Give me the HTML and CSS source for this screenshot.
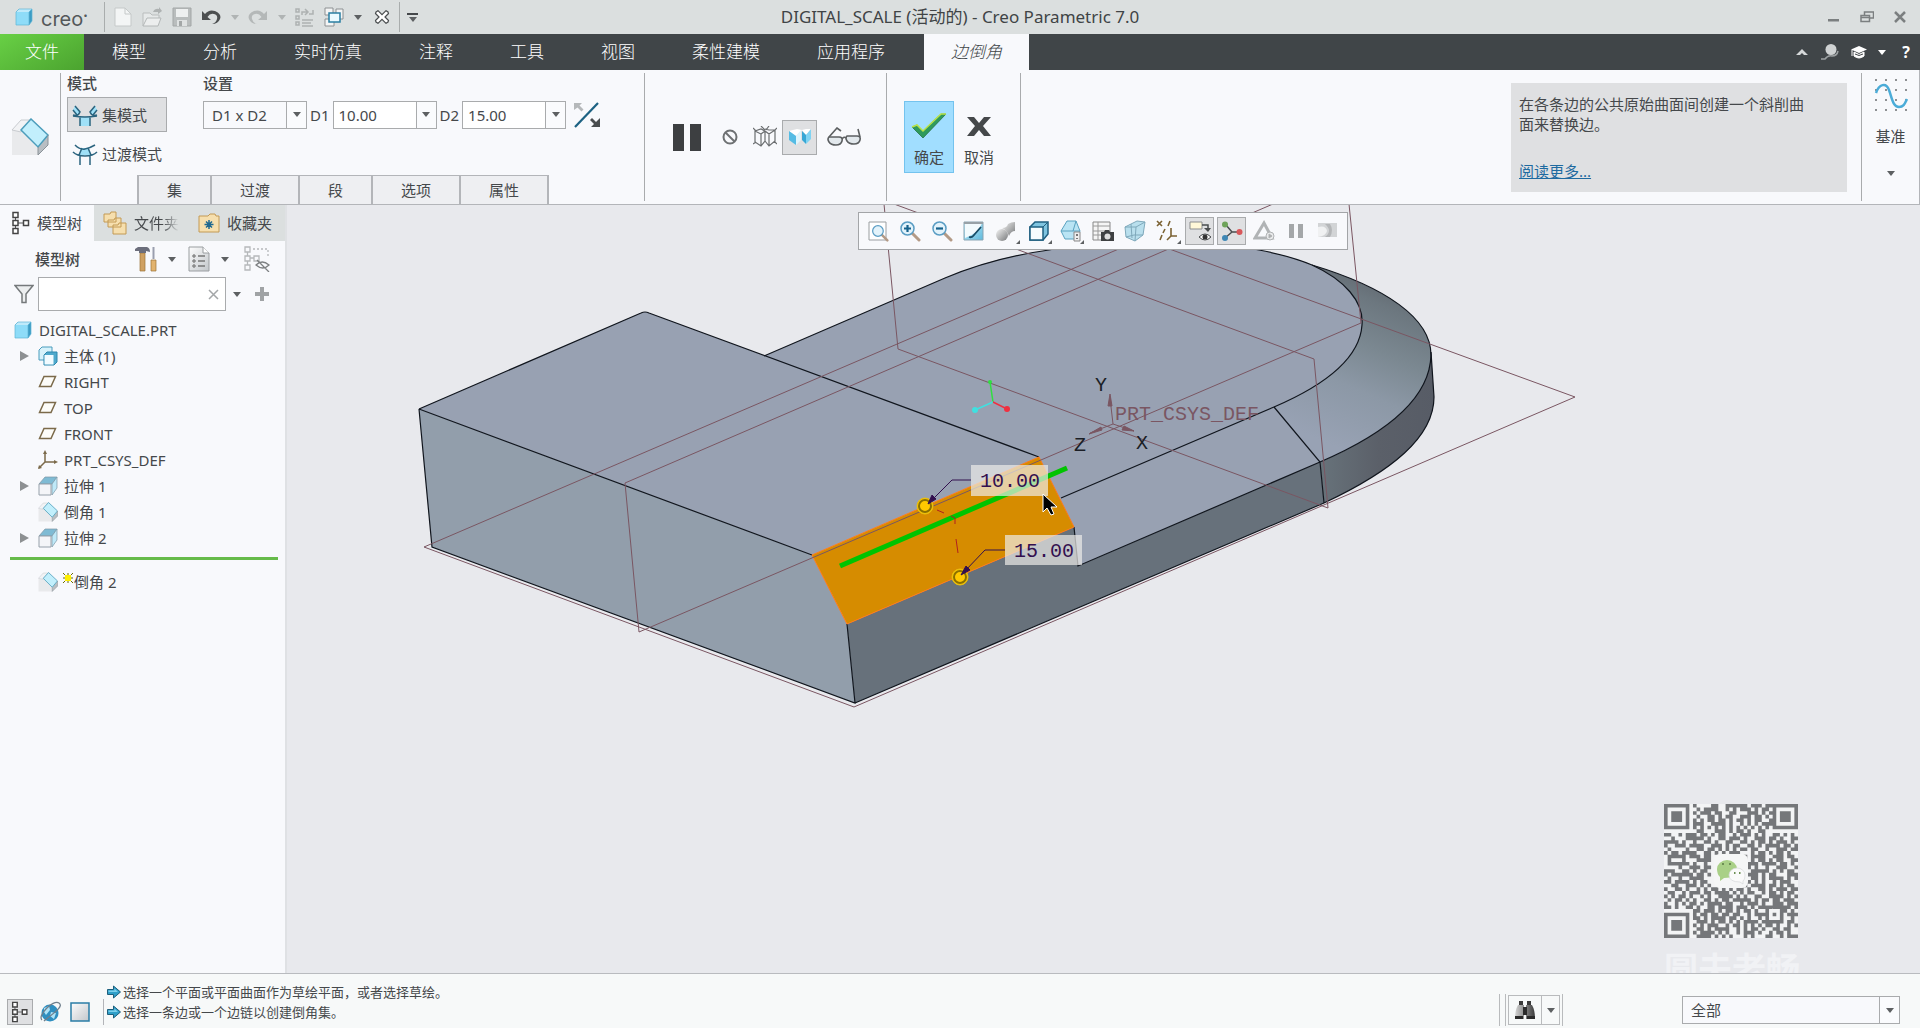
FILE: index.html
```html
<!DOCTYPE html>
<html lang="zh-CN">
<head>
    <meta charset="UTF-8">
    <meta name="viewport" content="width=device-width, initial-scale=1.0">
    <title>DIGITAL_SCALE (活动的) - Creo Parametric 7.0</title>
    <link rel="stylesheet" href="styles.css">
    <script src="qr.js" defer></script>
</head>
<body>

    <!-- 共用图标 -->
    <svg class="defs" width="0" height="0" aria-hidden="true">
        <defs>
            <linearGradient id="gBlue" x1="0" y1="0" x2="1" y2="1">
                <stop offset="0" stop-color="#c9f0fd"/><stop offset="1" stop-color="#5fb9dc"/>
            </linearGradient>
            <linearGradient id="gGray" x1="0" y1="0" x2="1" y2="1">
                <stop offset="0" stop-color="#fdfdfd"/><stop offset="1" stop-color="#c3c7cb"/>
            </linearGradient>
            <linearGradient id="gSteel" x1="0" y1="0" x2="1" y2="0">
                <stop offset="0" stop-color="#d4d4d4"/><stop offset="1" stop-color="#3c3c3c"/>
            </linearGradient>
            <linearGradient id="gBall" x1="0" y1="0" x2="1" y2="1">
                <stop offset="0" stop-color="#f4f4f4"/><stop offset="1" stop-color="#77797b"/>
            </linearGradient>
            <symbol id="cube" viewBox="0 0 20 20">
                <path d="M2 5 5 2h13v12l-3 4H2z" fill="#3c9cc4"/>
                <path d="M2 5 5 2h13l-3 3z" fill="#bfeafa"/>
                <path d="M2 5h13v13H2z" fill="#8edcf8"/>
                <path d="M2 5 5 2h13v12l-3 4H2zM15 5l3-3M15 5v13" fill="none" stroke="#5fb4d6" stroke-width=".7"/>
            </symbol>
            <symbol id="tree" viewBox="0 0 18 24">
                <path d="M3.500 7v3.500M3.500 14v3.500M6 12h5" stroke="#555" fill="none"/>
                <path d="M1 1.500h5v5H1zM1 9.500h5v5H1zM1 17.500h5v5H1zM11.500 9.500h5v5h-5z" fill="#fff" stroke="#444" stroke-width="1.500"/>
            </symbol>
            <symbol id="plane" viewBox="0 0 20 14">
                <path d="M6 1.500h11.500L13 11.500H1.500z" fill="#fdfcf8" stroke="#7b6a4a" stroke-width="1.500"/>
            </symbol>
            <symbol id="extrude" viewBox="0 0 20 20">
                <path d="M1 8 7 1h12l-5 7z" fill="#7fbbd4" stroke="#7c97a5" stroke-width=".7"/>
                <path d="M14 8l5-7v11l-5 7z" fill="#bfe9f8" stroke="#7c97a5" stroke-width=".7"/>
                <path d="M1 8h12v11H1z" fill="#f4f5f8" stroke="#96a0aa"/>
            </symbol>
            <symbol id="chamfer" viewBox="0 0 38 38">
                <path d="M1 12h12l14 19v6H1z" fill="#e9eaec"/>
                <path d="M1 12 10 2h10L10 14z" fill="#f2f3f5" stroke="#c9ccd0"/>
                <path d="M27 29 37 17v10L27 37z" fill="#b9bec3"/>
                <path d="M10 12 20 1l17 16-10 12z" fill="#c2effc" stroke="#4c9dbb" stroke-width="1.500"/>
                <path d="M27 29v8l10-10V17" fill="none" stroke="#8a9298"/>
            </symbol>
            <symbol id="arrow" viewBox="0 0 14 14">
                <path d="M.5 4.500h6v-3.500L13.500 7 6.500 13V9.500h-6z" fill="#2f9fc8" stroke="#1d5f7c"/>
                <path d="M1.500 5.500h6v-2l3.500 3.500h-9.500z" fill="#7cd0ec"/>
            </symbol>
            <symbol id="magnifier" viewBox="0 0 22 22">
                <path d="M13 13l7 7" stroke="#b39a86" stroke-width="3" stroke-linecap="round"/>
                <circle cx="8.500" cy="8.500" r="6.500" fill="#e3f3fb" stroke="#5a9dc4" stroke-width="1.500"/>
            </symbol>
        </defs>
    </svg>

    <!-- 标题栏 -->
    <header class="titlebar">
        <div class="quick">
            <div class="brand">
                <svg width="20" height="20"><use href="#cube"/></svg>
                <span class="brand-name">creo<sup>•</sup></span>
            </div>
            <button class="q" title="新建"><svg width="18" height="20" viewBox="0 0 18 20"><path d="M1 1h10l6 6v12H1z" fill="#f3f5f5" stroke="#c5c9c9"/><path d="M11 1v6h6" fill="none" stroke="#c5c9c9"/></svg></button>
            <button class="q" title="打开"><svg width="22" height="20" viewBox="0 0 22 20"><path d="M2 19V6h7l2 2h7v3" fill="#e6e9e9" stroke="#b9bdbd"/><path d="M2 19 6 11h14l-3 8z" fill="#eceeee" stroke="#b4b8b8"/><path d="M12 5q2-4 6-3v-2l3 4-4 3V5" fill="#aeb2b2"/></svg></button>
            <button class="q" title="保存"><svg width="20" height="20" viewBox="0 0 20 20"><path d="M1 1h18v18H1z" fill="#b9bdbd" stroke="#a3a7a7"/><path d="M4 2h12v8H4z" fill="#eef0f0"/><path d="M5 13h10v6H5z" fill="#dfe2e2"/><path d="M7 14h3v5H7z" fill="#a3a7a7"/></svg></button>
            <button class="q" title="撤消"><svg width="20" height="16" viewBox="0 0 20 16"><path d="M1 2v9h9L6.500 8Q9 4 13 5t3 5-5 5q6 0 8-5T14 2Q8 0 4 5z" fill="#4c4f50"/></svg><i class="caret pale"></i></button>
            <button class="q" title="重做"><svg width="20" height="16" viewBox="0 0 20 16"><path d="M19 2v9h-9L13.500 8Q11 4 7 5t-3 5 5 5q-6 0-8-5T6 2Q12 0 16 5z" fill="#b4b8b8"/></svg><i class="caret pale"></i></button>
            <button class="q" title="重新生成"><svg width="20" height="20" viewBox="0 0 20 20" fill="none" stroke="#aeb2b2" stroke-width="1.500"><path d="M1 2h3v3H1zM1 9h3v3H1zM1 15h3v3H1zM7 13h11M7 16h9M7 19h11"/><path d="M7 8V5h5M10 2l3 3-3 3M18 3v4h-4"/></svg></button>
            <button class="q" title="窗口"><svg width="20" height="20" viewBox="0 0 20 20"><path d="M1 1h8v7H1zM12 2h7v10h-7zM1 12h9v7H1z" fill="#f4f5f5" stroke="#8c9092"/><path d="M5 6h11v9H5z" fill="#eafaff" stroke="#2a7fa3" stroke-width="1.500"/></svg><i class="caret"></i></button>
            <button class="q q-close" title="关闭"><svg width="16" height="14" viewBox="0 0 16 14"><path d="M2 2 4 .700l4 4 4-4L14 2l.5 1.500L11 7l3.500 3.500L14 12l-2 1.300-4-4-4 4L2 12l-.5-1.500L5 7 1.500 3.500z" fill="#fff" stroke="#4a4d4f" stroke-width="1.200"/></svg></button>
            <button class="q q-more" title="自定义快速访问工具栏"><i class="bar"></i><i class="caret"></i></button>
        </div>
        <div class="title">DIGITAL_SCALE (活动的) - Creo Parametric 7.0</div>
        <div class="window-buttons">
            <button title="最小化"><svg width="14" height="14" viewBox="0 0 14 14"><path d="M1 9h11v2.500H1z" fill="#7b7f80"/></svg></button>
            <button title="还原"><svg width="14" height="14" viewBox="0 0 14 14" fill="none" stroke="#7b7f80" stroke-width="1.500"><path d="M4.500 5V2h9v6h-4M1 5.500h8.500v6H1zM1 7.500h8"/></svg></button>
            <button title="关闭窗口"><svg width="14" height="14" viewBox="0 0 14 14"><path d="M2 2l10 10M12 2 2 12" stroke="#7b7f80" stroke-width="2.500"/></svg></button>
        </div>
    </header>

    <!-- 功能区选项卡 -->
    <nav class="menu">
        <button class="file">文件</button>
        <button>模型</button>
        <button>分析</button>
        <button>实时仿真</button>
        <button>注释</button>
        <button>工具</button>
        <button>视图</button>
        <button>柔性建模</button>
        <button>应用程序</button>
        <button class="current">边倒角</button>
        <div class="menu-tools">
            <svg width="14" height="10" viewBox="0 0 14 10"><path d="M1 8 7 2l6 6h-4L7 6 5 8z" fill="#d5d8d9"/></svg>
            <svg width="20" height="18" viewBox="0 0 20 18"><circle cx="11" cy="6.500" r="5.500" fill="#cfd2d3"/><path d="M1 16h4q3-4 7-3 5 0 6-5" fill="none" stroke="#9da1a3" stroke-width="1.500"/></svg>
            <svg width="16" height="14" viewBox="0 0 16 14"><path d="M8 1l8 3.500L8 8 0 4.500z" fill="#fff"/><path d="M3 7v4q5 4 10 0V7L8 9.500zM1 5v6" fill="#fff" stroke="#fff"/><path d="M4 9q4 3 8 0" fill="none" stroke="#404548"/></svg>
            <i class="caret white"></i>
            <span class="help">?</span>
        </div>
    </nav>

    <!-- 功能区 -->
    <section class="ribbon">
        <div class="feature"><svg width="38" height="38"><use href="#chamfer"/></svg></div>
        <div class="sep"></div>
        <div class="dash">
            <div class="groups">
                <div class="group modes">
                    <h3>模式</h3>
                    <button class="mode pressed">
                        <svg width="26" height="22" viewBox="0 0 26 22"><path d="M3 2 8 8 5 11 1 6zM23 2l-5 6 3 3 4-5zM8 12q5 2 10 0v10H8z" fill="#9fe0f7"/><path d="M1 11q5 2 7-3L3 2M25 11q-5 2-7-3l5-6M1 6l4 5M25 6l-4 5M1 12q12 2 24 0M8 12v10M18 12v10" fill="none" stroke="#2b647f" stroke-width="1.500"/></svg>
                        集模式
                    </button>
                    <button class="mode">
                        <svg width="26" height="22" viewBox="0 0 26 22"><path d="M9 5h8l2 7H7z" fill="#9fe0f7"/><path d="M1 9q4 4 12 4t12-4M3 2q5 5 10 4t10-4M10 5l-3 7M16 5l3 7M8 12v10M18 12v10" fill="none" stroke="#2b647f" stroke-width="1.500"/></svg>
                        过渡模式
                    </button>
                </div>
                <div class="group">
                    <h3>设置</h3>
                    <div class="settings">
                        <span class="combo scheme">
                            <select aria-label="倒角方案"><option>D1 x D2</option></select>
                            <span class="drop"><i class="caret"></i></span>
                        </span>
                        <label for="d1">D1</label>
                        <span class="combo">
                            <input id="d1" type="text" value="10.00">
                            <button class="drop" title="D1 最近值"><i class="caret"></i></button>
                        </span>
                        <label for="d2">D2</label>
                        <span class="combo">
                            <input id="d2" type="text" value="15.00">
                            <button class="drop" title="D2 最近值"><i class="caret"></i></button>
                        </span>
                        <button class="flip" title="反向"><svg width="26" height="26" viewBox="0 0 26 26"><path d="M1 25 24 1" stroke="#1d6283" stroke-width="2.200"/><path d="M0 1h8L5.500 3.500l4 4-2 2-4-4L0 8z" fill="#b5b8ba"/><path d="M26 25h-9l3-3-4-4 2-2 4 4 4-4z" fill="#4a4d4f"/></svg></button>
                    </div>
                </div>
            </div>
            <div class="subtabs">
                <button>集</button><button>过渡</button><button>段</button><button>选项</button><button>属性</button>
            </div>
        </div>
        <div class="sep"></div>
        <div class="controls">
            <button class="pause" title="暂停"><svg width="28" height="27" viewBox="0 0 28 27"><path d="M0 0h11v27H0zM17 0h11v27H17z" fill="#3d3f41"/></svg></button>
            <button title="无预览"><svg width="16" height="16" viewBox="0 0 16 16"><circle cx="8" cy="8" r="6.500" fill="none" stroke="#6e7173" stroke-width="2"/><path d="M3.500 3.500l9 9" stroke="#6e7173" stroke-width="2"/></svg></button>
            <button title="未连接"><svg width="24" height="22" viewBox="0 0 24 22" fill="none" stroke="#6b6e70" stroke-width="1.200"><path d="M2 5l6-2 4 2v10l-4 5-6-4zM2 5l6 3v12M8 8l4-3M12 5l4 3 6-4v11l-6 5-4-5M16 8v12M12 3l4 1 6 0M8 0l4 4M0 2l3 3M16 0l-3 4M24 2l-3 3M0 18l3-2M21 15l3 3"/></svg></button>
            <button class="pressed" title="已连接"><svg width="24" height="18" viewBox="0 0 24 18"><path d="M1 3l8-2 5 1-6 6z" fill="#fff"/><path d="M1 3l7 5v9l-7-5z" fill="#55bce4"/><path d="M8 8l5-6v10l-5 5z" fill="#dff5fc"/><path d="M14 2l4-1h5l-5 6z" fill="#fff"/><path d="M14 3l4 4v9l-4-4z" fill="#37a7d5"/><path d="M18 7l5-6v10l-5 5z" fill="#7fd3f2"/></svg></button>
            <button class="preview" title="特征预览"><svg width="34" height="20" viewBox="0 0 34 20" fill="none" stroke="#5c5f61" stroke-width="1.600"><path d="M2 10h10q4 0 3 4t-6 4-7-3 0-5zM20 9h10q4 0 3 4t-6 4-7-3 0-5z" fill="#e2e8ec"/><path d="M15 12q2-3 4-1M2 10 10 1l4 3M33 10 31 2"/></svg></button>
        </div>
        <div class="sep"></div>
        <div class="confirm">
            <button class="ok">
                <svg width="36" height="28" viewBox="0 0 36 28"><path d="M1 15l5-2 6 6L30 2h5L12 26z" fill="#2f9a5c" stroke="#1f6b3c" stroke-width=".7"/><path d="M1 15l5-2 6 6L30 2h5" fill="none" stroke="#b9e34b" stroke-width="1.600"/></svg>
                确定
            </button>
            <button class="cancel">
                <svg width="26" height="28" viewBox="0 0 26 28"><path d="M1 5h7l5 6 5-6h7l-8 9 8 10h-7l-5-6-5 6H1l8-10z" fill="#45484a"/></svg>
                取消
            </button>
        </div>
        <div class="sep"></div>
        <aside class="hint">
            <p>在各条边的公共原始曲面间创建一个斜削曲面来替换边。</p>
            <a href="#">阅读更多...</a>
        </aside>
        <div class="sep"></div>
        <button class="datum">
            <svg width="34" height="34" viewBox="0 0 34 34"><path d="M1 1h2M11 1h2M21 1h2M31 1h2M1 11h2M11 11h2M21 11h2M31 11h2M1 21h2M11 21h2M21 21h2M31 21h2M1 31h2M11 31h2M21 31h2M31 31h2" stroke="#6b6e70" stroke-width="1.500"/><path d="M2 14C5 5 12 3 15 11c3 8 4 17 10 17 5 0 6-4 8-8" fill="none" stroke="#4bacd8" stroke-width="2.500"/></svg>
            基准
            <i class="caret"></i>
        </button>
    </section>

    <main class="work">
        <!-- 导航器 -->
        <aside class="navigator">
            <div class="nav-tabs">
                <button class="current"><svg width="18" height="24"><use href="#tree"/></svg>模型树</button>
                <button class="folder-tab"><svg width="24" height="24" viewBox="0 0 24 24" fill="#f6dfae" stroke="#c39a55"><path d="M1 3h6l1-2h5v10H1zM5 9h6l1-2h6v9H5zM10 14h5l1-2h7v11H10z"/></svg><span>文件夹</span></button>
                <button><svg width="22" height="20" viewBox="0 0 22 20"><path d="M1 3h9l2-2h5l1 2h3v16H1z" fill="#f6dfae" stroke="#c39a55"/><path d="M11 7v9M6.500 11.500h9M8 8.500l6 6M14 8.500l-6 6" stroke="#1f6890" stroke-width="1.500"/></svg>收藏夹</button>
            </div>
            <div class="tree-head">
                <h3>模型树</h3>
                <button title="设置"><svg width="22" height="26" viewBox="0 0 22 26"><path d="M5 7h5v18H5z" fill="#cfa163" stroke="#9c7438" stroke-width=".7"/><path d="M0 3l3-2h9q3 1 3 5l-4-1v2H4V5H0z" fill="#6c6e7c"/><path d="M17.500 1h2v12h-2z" fill="#9a9eae"/><path d="M16 14h5v11h-5z" fill="#e2b36e" stroke="#9c7438" stroke-width=".7"/></svg><i class="caret"></i></button>
                <button title="显示"><svg width="22" height="26" viewBox="0 0 22 26"><path d="M1 1h14l6 6v18H1z" fill="url(#gGray)" stroke="#9a9ea1"/><path d="M15 1v6h6" fill="#fff" stroke="#9a9ea1"/><path d="M10 10h7M10 15h7M10 20h7" stroke="#777" stroke-width="1.500"/><path d="M5 9h2v2H5zM5 14h2v2H5zM5 19h2v2H5z" fill="#fff" stroke="#666"/></svg><i class="caret"></i></button>
                <button title="隐藏"><svg width="26" height="26" viewBox="0 0 26 26" fill="none" stroke="#b5b8ba" stroke-width="1.300"><path d="M1 1h5v5H1zM1 10h5v5H1zM1 19h5v5H1zM10 10h5v5h-5zM3.500 6v4M3.500 15v4M6 12h4"/><path d="M9 3h15v9" stroke-dasharray="2 2"/><path d="M12 19q6-6 13 0-6 6-13 0zM13 14l12 12" stroke="#7d8082"/></svg></button>
            </div>
            <div class="filter">
                <svg width="20" height="20" viewBox="0 0 20 20"><path d="M1 1.500h18L12 10v8.500H8V10z" fill="#eceeef" stroke="#75797b" stroke-width="1.500"/></svg>
                <div class="search">
                    <input type="text" aria-label="筛选模型树">
                    <button title="清除"><svg width="11" height="11" viewBox="0 0 11 11"><path d="M1 1l9 9M10 1 1 10" stroke="#a3a6a8" stroke-width="1.500"/></svg></button>
                </div>
                <button title="选项"><i class="caret"></i></button>
                <button class="add" title="添加"><svg width="14" height="14" viewBox="0 0 14 14"><path d="M7 0v14M0 7h14" stroke="#a0a3a5" stroke-width="4"/></svg></button>
            </div>
            <ul class="tree">
                <li class="root"><svg width="20" height="20"><use href="#cube"/></svg>DIGITAL_SCALE.PRT</li>
                <li><i class="expand"></i><svg width="20" height="20" viewBox="0 0 20 20"><path d="M1 4 4 1h10v10l-3 3H1z" fill="#d7f2fb" stroke="#4b9cbd"/><path d="M6 9l3-3h10v10l-3 3H6z" fill="#4fa9cc" stroke="#2d87ad"/><path d="M6.500 9h9v9.500h-9z" fill="#f2fbff"/></svg>主体 (1)</li>
                <li><svg width="20" height="14"><use href="#plane"/></svg>RIGHT</li>
                <li><svg width="20" height="14"><use href="#plane"/></svg>TOP</li>
                <li><svg width="20" height="14"><use href="#plane"/></svg>FRONT</li>
                <li><svg width="20" height="20" viewBox="0 0 20 20"><path d="M7 12V2M7 12h11M7 12l-6 6" stroke="#7b6a4a" stroke-width="1.500" fill="none"/><path d="M5 4 7 0l2 4zM16 10l4 2-4 2zM0 19l1-4 3 3z" fill="#7b6a4a"/></svg>PRT_CSYS_DEF</li>
                <li><i class="expand"></i><svg width="20" height="20"><use href="#extrude"/></svg>拉伸 1</li>
                <li><svg width="20" height="20"><use href="#chamfer"/></svg>倒角 1</li>
                <li><i class="expand"></i><svg width="20" height="20"><use href="#extrude"/></svg>拉伸 2</li>
            </ul>
            <div class="insert-line"></div>
            <ul class="tree pending">
                <li><svg width="20" height="20"><use href="#chamfer"/></svg><svg class="spark" width="10" height="10" viewBox="0 0 10 10"><path d="M0 0l10 10M10 0 0 10M5 0v10M0 5h10" stroke="#6c6a00"/><path d="M2 2h6v6H2z" fill="#fff000"/></svg>倒角 2</li>
            </ul>
        </aside>

        <!-- 图形窗口 -->
        <section class="viewport">
            <svg class="scene" viewBox="287 205 1633 768">
                <defs>
                    <linearGradient id="bevel" gradientUnits="userSpaceOnUse" x1="1320" y1="440" x2="1390" y2="280">
                        <stop offset="0" stop-color="#98a2b4"/><stop offset=".35" stop-color="#8c98a6"/><stop offset=".6" stop-color="#7b8891"/><stop offset=".85" stop-color="#6c777f"/><stop offset="1" stop-color="#5f666e"/>
                    </linearGradient>
                    <linearGradient id="rim" gradientUnits="userSpaceOnUse" x1="1322" y1="0" x2="1434" y2="0">
                        <stop offset="0" stop-color="#67727a"/><stop offset=".5" stop-color="#5b6069"/><stop offset="1" stop-color="#575c66"/>
                    </linearGradient>
                </defs>

                <!-- 实体表面 -->
                <path d="M1431 352C1431 395 1392 431 1320 462L1324 503C1392 471 1434 437 1434 397z" fill="url(#rim)"/>
                <path d="M1312 265C1385 287 1431 318 1431 355C1430 395 1392 431 1320 462L1274 407z" fill="url(#bevel)"/>
                <path d="M764 356 945 278C985 261 1020 254 1049 250C1110 236 1190 236 1259 250C1285 255 1300 260 1312 265C1345 280 1364 302 1362 325C1360 355 1330 383 1274 407L1320 462 1078 566 1050 520z" fill="#98a1b2"/>
                <path d="M847 624 1074 527 1078 566 1320 462 1324 503 855 703z" fill="#67717b"/>
                <path d="M419 409 641 313Q645 311 649 313L1039 457 812 555z" fill="#98a1b2"/>
                <path d="M419 409 812 555 847 624 855 703 432 547z" fill="#929eab"/>

                <!-- 轮廓边 -->
                <g class="edge">
                    <path d="M419 409 641 313Q645 311 649 313L1039 457M419 409 812 555M419 409 432 547 855 703 847 624M855 703 1324 503C1392 471 1434 437 1434 397L1431 352"/>
                    <path d="M764 356 945 278C985 261 1020 254 1049 250C1110 236 1190 236 1259 250C1285 255 1300 260 1312 265C1345 280 1364 302 1362 325C1360 355 1330 383 1274 407L1061 498"/>
                    <path d="M1312 265C1385 287 1431 318 1431 355C1430 395 1392 431 1320 462L1078 566 1074 527M1274 407 1320 462 1324 503"/>
                </g>

                <!-- 正在创建的倒角 -->
                <path d="M812 555 1039 457 1074 527 847 624z" fill="#d68c00" stroke="#ff7a1a"/>

                <!-- 基准平面 -->
                <g class="datum-line">
                    <path d="M424 547 1142 239 1575 397 854 707z"/>
                    <path d="M884 204 898 349 1328 508 1314 359 894 204"/>
                    <path d="M1273 204 625 483 639 632 1361 323 1349 204"/>
                    <path d="M1113 424 1110 398M1113 424 1090 433M1113 424 1134 431"/>
                    <path d="M1108 406 1110 394 1112 406zM1101 427 1089 434 1102 430zM1124 426 1134 431 1122 430z" class="tip"/>
                </g>
                <path d="M840 566 1067 468" stroke="#00c400" stroke-width="5"/>
                <path d="M937 510 944 513M951 516 955 518V524M956 539 958 553" class="dash-line"/>

                <!-- 旋转中心 -->
                <g stroke-width="1.500">
                    <path d="M993 402 990 382" stroke="#2fe040"/><circle cx="990" cy="382" r="2" fill="#2fe040"/>
                    <path d="M993 402 975 410" stroke="#3fe0e0"/><circle cx="975" cy="410" r="3" fill="#3fe0e0"/>
                    <path d="M993 402 1007 409" stroke="#f03040"/><circle cx="1007" cy="409" r="3" fill="#f03040"/>
                </g>

                <g class="stick">
                    <text x="1095" y="391">Y</text>
                    <text x="1074" y="451">Z</text>
                    <text x="1136" y="449">X</text>
                    <text x="1115" y="420" class="csys">PRT_CSYS_DEF</text>
                </g>

                <!-- 尺寸和控制滑块 -->
                <g class="dimension">
                    <circle cx="925" cy="506" r="8" class="halo"/>
                    <circle cx="925" cy="506" r="6"/>
                    <path d="M971 480H952L930 502"/>
                    <path d="M928 504 932 495 936 499z" class="tip"/>
                    <rect x="971" y="465" width="77" height="31"/>
                    <text x="980" y="487">10.00</text>
                    <circle cx="960" cy="577" r="8" class="halo"/>
                    <circle cx="960" cy="577" r="6"/>
                    <path d="M1005 550H985L964 572"/>
                    <path d="M961 575 966 566 970 570z" class="tip"/>
                    <rect x="1005" y="535" width="77" height="30"/>
                    <text x="1014" y="557">15.00</text>
                </g>
                <path d="M1043 494v18l4-4 4 7 3-1-3-7h6z" fill="#000" stroke="#fff"/>

                <!-- 二维码 -->
                <g transform="translate(1664 804)">
                    <rect width="134" height="134" fill="#f3f4f5"/>
                    <path id="qr" fill="#75777a"/>
                    <rect x="50" y="50" width="34" height="34" rx="6" fill="#f5f6f6"/>
                    <path d="M53 65a10 9 0 1 1 20 0q0 9-13 9l-4 3v-4q-3-3-3-8z" fill="#a9d087"/>
                    <path d="M65 71a8 7 0 1 1 16 0q0 5-2 6v3l-3-2q-11 0-11-7z" fill="#fafafa" stroke="#d6d8da" stroke-width=".7"/>
                    <path d="M58 60h2M65 60h2M70 69h1.500M75 69h1.500" stroke="#6d8f55" stroke-width="2"/>
                </g>
                <text x="1732" y="982" class="watermark">圆夫老畅</text>
            </svg>

            <div class="graphics-bar">
                <button title="重新调整"><svg width="22" height="22" viewBox="0 0 22 22"><path d="M2 2h17v18H2z" fill="#fff" stroke="#9a9ea1"/><use href="#magnifier" x="4" y="4" width="18" height="18"/></svg></button>
                <button title="放大"><svg width="22" height="22" viewBox="0 0 22 22"><use href="#magnifier"/><path d="M5 8.500h7M8.500 5v7" stroke="#17628c" stroke-width="2.200"/></svg></button>
                <button title="缩小"><svg width="22" height="22" viewBox="0 0 22 22"><use href="#magnifier"/><path d="M5 8.500h7" stroke="#17628c" stroke-width="2.200"/></svg></button>
                <button title="重画"><svg width="22" height="22" viewBox="0 0 22 22"><path d="M1 2h19v18H1z" fill="url(#gBlue)" stroke="#8aa5b3"/><path d="M2 3h17q-3 10-17 15z" fill="#f2fafd"/><path d="M1 2h19v2H1z" fill="#98a1a7"/><path d="M6 17q3 1 5-2l7-8" stroke="#184c66" stroke-width="1.800" fill="none"/></svg></button>
                <button class="more" title="渲染选项"><svg width="22" height="22" viewBox="0 0 22 22"><circle cx="7" cy="15" r="6" fill="url(#gBall)"/><path d="M7 8q5 0 6-4 3-2 7-2v9q-4 0-6 5-2-6-7-8z" fill="url(#gBall)"/></svg></button>
                <button class="more" title="显示样式"><svg width="22" height="22" viewBox="0 0 22 22"><path d="M2 7l5-5h13v12l-5 6H2z" fill="#7fc4e0" stroke="#1f5f80" stroke-width="1.500"/><path d="M2 7h13v13H2z" fill="#f7fcfe" stroke="#1f5f80" stroke-width="1.500"/><path d="M15 7l5-5" stroke="#1f5f80"/></svg></button>
                <button class="more" title="已保存方向"><svg width="22" height="22" viewBox="0 0 22 22"><path d="M1 11 7 1h9l4 10-3 8H5z" fill="#b9e4f4" stroke="#5aa2c0"/><path d="M1 11h19M16 1l-3 10" stroke="#5aa2c0" fill="none"/><path d="M14 12h6v9h-6z" fill="#eee" stroke="#888"/><path d="M16 14h2v2h-2zM16 18h2v1h-2z" fill="#777"/></svg></button>
                <button title="视图管理器"><svg width="22" height="22" viewBox="0 0 22 22"><path d="M1 2h17v18H1z" fill="#f5f5f5" stroke="#888"/><path d="M1 6h17M6 2v18M1 11h17M1 15h17" stroke="#999"/><path d="M9 12h3l1-2h4l1 2h4v9H9z" fill="#3e4042"/><circle cx="15.500" cy="16.500" r="3" fill="#ddd"/></svg></button>
                <button title="透视图"><svg width="22" height="22" viewBox="0 0 22 22"><path d="M1 7 13 1l8 1-2 13-8 6-9-4z" fill="#b9dfed" stroke="#7fa9bb"/><path d="M1 7l11 0 9-5M12 7l-1 14M2 17l8-2 9 0M7 4l1 14" fill="none" stroke="#7fa9bb"/></svg></button>
                <button class="more" title="基准显示过滤器"><svg width="22" height="22" viewBox="0 0 22 22" fill="none" stroke="#7b6233" stroke-width="1.600"><path d="M1 1l5 5M6 1 1 6M14 1l-2 5M9 9l-2 4M6 15l-2 5M15 8v8M15 16h6M15 16l-4 4"/></svg></button>
                <button class="pressed" title="注释显示"><svg width="22" height="22" viewBox="0 0 22 22"><path d="M1 2h12v7H1z" fill="#fff8d8" stroke="#8a8d8f"/><path d="M13 5h6v5" fill="none" stroke="#4a4d4f" stroke-width="1.500"/><path d="M15 8h7l-3 4z" fill="#4a4d4f"/><path d="M10 17q6-6 12 0-6 6-12 0z" fill="#fff" stroke="#4a4d4f"/><circle cx="16" cy="17" r="2.500" fill="#333"/></svg></button>
                <button class="pressed" title="旋转中心"><svg width="22" height="22" viewBox="0 0 22 22"><path d="M11 12 5 5M11 12 4 18M11 12h8" stroke="#4a4d4f" stroke-width="1.500"/><circle cx="4" cy="4.500" r="3" fill="#6ea35a"/><circle cx="4" cy="18" r="3" fill="#3f87b5"/><circle cx="18.500" cy="12" r="3" fill="#d8575a"/></svg></button>
                <button title="仿真"><svg width="22" height="22" viewBox="0 0 22 22" fill="none" stroke="#b0b3b5"><path d="M11 3 2 18h17z" stroke-width="3"/><circle cx="17" cy="16" r="4" fill="#e9eaeb"/><path d="M16 14l3 2-3 2z" fill="#aaa"/></svg></button>
                <button title="暂停仿真"><svg width="22" height="22" viewBox="0 0 22 22"><path d="M4 4h5v14H4zM13 4h5v14h-5z" fill="#a4a7a9"/></svg></button>
                <button title="仿真结果"><svg width="22" height="22" viewBox="0 0 22 22"><path d="M1 3h19v14H1z" fill="#d2d4d6"/><path d="M1 7q8-2 9 4-1 5-9 6z" fill="#f0f1f2"/><path d="M8 4q8 7 0 13h5q4-7 0-13z" fill="#b4b6b8"/></svg></button>
            </div>
        </section>
    </main>

    <!-- 状态栏 -->
    <footer class="status">
        <div class="status-buttons">
            <button class="pressed" title="导航器"><svg width="18" height="22"><use href="#tree"/></svg></button>
            <button title="浏览器"><svg width="22" height="22" viewBox="0 0 22 22"><circle cx="11" cy="12" r="8.500" fill="#2f8fc0"/><path d="M5 7l5-2 1 4-4 5-2-3zM12 11l5 1-2 6-4-3z" fill="#aee3f7"/><path d="M3 19C-2 15 14-2 20 2S10 15 5 20" fill="none" stroke="#6f7f8c" stroke-width="1.300"/></svg></button>
            <button title="全屏"><svg width="20" height="20" viewBox="0 0 20 20"><path d="M1 1h18v18H1z" fill="url(#gGray)" stroke="#2b7da6" stroke-width="1.500"/></svg></button>
        </div>
        <div class="messages">
            <p><svg width="14" height="14"><use href="#arrow"/></svg>选择一个平面或平面曲面作为草绘平面，或者选择草绘。</p>
            <p><svg width="14" height="14"><use href="#arrow"/></svg>选择一条边或一个边链以创建倒角集。</p>
        </div>
        <div class="find">
            <button title="查找"><svg width="20" height="20" viewBox="0 0 20 20"><path d="M4 1h4v4H4zM12 1h4v4h-4z" fill="#3a3a3a"/><path d="M3 5h6v14H0q0-9 3-14zM11 5h6q3 5 3 14h-9z" fill="url(#gSteel)"/><path d="M8 7h4v8H8zM0 16h8v3H0zM12 16h8v3h-8z" fill="#2b2b2b"/></svg></button>
            <button class="find-drop" title="查找选项"><i class="caret"></i></button>
        </div>
        <span class="combo selection">
            <select aria-label="选择过滤器"><option>全部</option></select>
            <span class="drop"><i class="caret"></i></span>
        </span>
    </footer>

</body>
</html>
```

FILE: styles.css
```css
* {
    box-sizing: border-box;
}

body {
    margin: 0;
    height: 100vh;
    display: flex;
    flex-direction: column;
    overflow: hidden;
    font-family: "Noto Sans", "Noto Sans CJK SC", sans-serif;
    font-size: 15px;
    line-height: 20px;
    color: #45484b;
    background: #f8f9fc;
}

button,
input,
select {
    font: inherit;
    color: inherit;
    margin: 0;
    padding: 0;
    border: none;
    background: none;
}

button {
    display: flex;
    align-items: center;
    justify-content: center;
    white-space: nowrap;
    cursor: pointer;
}

svg {
    display: block;
    flex: none;
}

h3,
p,
ul {
    margin: 0;
    padding: 0;
}

h3 {
    font-size: 15px;
    font-weight: 500;
    line-height: 20px;
}

.defs {
    position: absolute;
}

/* 下拉三角 */
.caret {
    display: inline-block;
    border: 4px solid transparent;
    border-top: 5px solid #5d6062;
    border-bottom: none;
}

.caret.pale {
    border-top-color: #b0b4b4;
}

.caret.white {
    border-top-color: #fff;
}

.pressed {
    background: #dfe0e2;
    border: 1px solid #a9abad;
}

/* 标题栏 */
.titlebar {
    display: grid;
    grid-template-columns: 1fr auto 1fr;
    align-items: center;
    height: 34px;
    background: #dbdfdf;
}

.quick {
    display: flex;
    align-items: center;
    height: 28px;
    padding-left: 14px;
}

.brand {
    display: flex;
    align-items: center;
    gap: 7px;
    width: 91px;
    height: 30px;
    border-right: 1px solid #a9adad;
}

.brand-name {
    font-family: Inter, sans-serif;
    font-size: 20px;
    color: #54585a;
}

.brand-name sup {
    font-size: 8px;
}

.q {
    gap: 10px;
    margin-left: 9px;
}

.q-close {
    margin-left: 12px;
}

.q-more {
    flex-direction: column;
    gap: 2px;
    height: 30px;
    padding-left: 7px;
    border-left: 1px solid #a9adad;
}

.q-more .bar {
    width: 11px;
    height: 2px;
    background: #45484b;
}

.title {
    font-size: 17px;
    color: #404446;
}

.window-buttons {
    display: flex;
    justify-content: flex-end;
    gap: 19px;
    padding-right: 13px;
}

/* 选项卡 */
.menu {
    display: flex;
    height: 36px;
    background: #404548;
    color: #fff;
    font-size: 17px;
    font-weight: 300;
}

.menu > button {
    padding: 0 29px 0 28px;
}

.menu .file {
    padding: 0 25px;
    background: linear-gradient(150deg, #68d045, #4ba32f);
}

.menu .current {
    margin-left: 10px;
    padding: 0 27px;
    background: #f8f9fc;
    color: #404548;
    font-style: italic;
}

.menu-tools {
    display: flex;
    align-items: center;
    gap: 11px;
    margin-left: auto;
    padding-right: 10px;
}

.help {
    margin-left: 5px;
    font-size: 16px;
    font-weight: 700;
}

/* 功能区 */
.ribbon {
    display: flex;
    height: 135px;
    border-bottom: 1px solid #b3b5b9;
    background: #f8f9fc;
}

.sep {
    flex: none;
    width: 1px;
    margin: 3px 0;
    background: #a9abad;
}

.feature {
    display: flex;
    align-items: center;
    justify-content: center;
    width: 60px;
}

.dash {
    display: flex;
    flex-direction: column;
    justify-content: space-between;
    width: 583px;
    padding: 3px 0 0 6px;
}

.groups {
    display: flex;
}

.modes {
    width: 136px;
}

.mode {
    gap: 4px;
    height: 35px;
    margin-top: 4px;
    padding: 0 5px;
}

.mode.pressed {
    width: 100px;
    padding: 0 4px;
    justify-content: flex-start;
}

.settings {
    display: flex;
    align-items: center;
    gap: 3px;
    height: 35px;
    margin-top: 4px;
}

.combo {
    display: flex;
    position: relative;
    width: 104px;
    height: 28px;
    border: 1px solid #a9abad;
    background: #fff;
}

.combo input {
    flex: 1;
    min-width: 0;
    padding-left: 5px;
}

.combo select {
    flex: 1;
    appearance: none;
    padding-left: 8px;
}

.combo .drop {
    display: flex;
    align-items: center;
    justify-content: center;
    width: 20px;
    border-left: 1px solid #a9abad;
    background: #fafbfd;
}

/* 三角叠放在下拉列表上方 */
select + .drop {
    position: absolute;
    top: 0;
    right: 0;
    bottom: 0;
    pointer-events: none;
}

.scheme select,
.selection select {
    background: #f8f9fc;
}

.flip {
    margin-left: 5px;
}

.subtabs {
    display: flex;
    margin-left: 70px;
}

.subtabs button {
    height: 29px;
    padding: 0 28px;
    border: 1px solid #b3b5b9;
    border-width: 1px 0 0 2px;
    background: #eeeff2;
}

.subtabs button:last-child {
    border-right-width: 2px;
}

.controls {
    display: flex;
    align-items: center;
    width: 241px;
    padding-left: 16px;
}

.controls button {
    width: 35px;
    height: 35px;
}

.controls .pause {
    width: 51px;
}

.controls .preview {
    width: 54px;
}

.confirm {
    display: flex;
    align-items: center;
    width: 133px;
    padding-left: 17px;
}

.confirm button {
    flex-direction: column;
    gap: 7px;
    width: 50px;
    height: 72px;
    padding-top: 5px;
    border: 1px solid transparent;
}

.confirm .ok {
    border-color: #74c3ee;
    background: #a1deff;
}

.hint {
    width: 336px;
    height: 109px;
    margin: 13px 14px 0 auto;
    padding: 11px 30px 0 8px;
    background: #dfe0e2;
}

.hint p {
    margin-bottom: 27px;
}

.hint a {
    color: #1e6aa0;
}

.datum {
    flex-direction: column;
    justify-content: flex-start;
    gap: 13px;
    width: 58px;
    padding-top: 9px;
    border-right: 1px solid #b3b5b9;
}

.datum .caret {
    margin-top: 12px;
}

/* 工作区 */
.work {
    flex: 1;
    display: flex;
    min-height: 0;
}

.navigator {
    width: 287px;
    border-right: 2px solid #dfe1e4;
}

.nav-tabs {
    display: flex;
    height: 36px;
    background: #dbdfdf;
}

.nav-tabs button {
    gap: 7px;
    flex: none;
    padding-left: 13px;
}

.nav-tabs .current {
    width: 94px;
    justify-content: flex-start;
    padding-left: 12px;
    background: #f8f9fc;
}

.nav-tabs .folder-tab {
    width: 91px;
    justify-content: flex-start;
    padding-left: 9px;
}

.folder-tab span {
    background: linear-gradient(90deg, #45484b 65%, #dbdfdf);
    background-clip: text;
    color: transparent;
}

.tree-head {
    display: flex;
    align-items: center;
    height: 36px;
    padding-left: 35px;
}

.tree-head h3 {
    width: 104px;
}

.tree-head button {
    gap: 11px;
    margin-right: 12px;
}

.tree-head button + button {
    margin-right: 15px;
}

.filter {
    display: flex;
    align-items: center;
    height: 34px;
    padding-left: 14px;
}

.search {
    display: flex;
    align-items: center;
    width: 188px;
    height: 34px;
    margin: 0 7px 0 4px;
    padding-right: 6px;
    border: 1px solid #a9abad;
    background: #fff;
}

.search input {
    flex: 1;
    min-width: 0;
    padding-left: 6px;
}

.add {
    margin-left: 14px;
}

.tree {
    list-style: none;
    padding: 6px 0 0 13px;
}

.tree li {
    display: flex;
    align-items: center;
    gap: 6px;
    height: 26px;
    padding-left: 25px;
    position: relative;
}

.tree .root {
    padding-left: 0;
}

.expand {
    position: absolute;
    left: 7px;
    border: 5px solid transparent;
    border-left: 9px solid #8d9092;
    border-right: none;
}

.insert-line {
    height: 3px;
    margin: 6px 7px 0 10px;
    background: #66bb4a;
}

.pending {
    padding-top: 9px;
}

.pending li {
    gap: 1px;
}

.spark {
    margin: -8px 0 0 4px;
}

/* 图形窗口 */
.viewport {
    flex: 1;
    position: relative;
    min-width: 0;
    overflow: hidden;
    background: #e8e9ed;
}

.scene {
    width: 100%;
    height: 100%;
    font-family: "Liberation Mono", monospace;
}

.edge path {
    fill: none;
    stroke: #10151d;
    stroke-width: 1.2;
}

.datum-line path {
    fill: none;
    stroke: #7a5662;
}

.datum-line .tip {
    fill: #7a5662;
}

.dash-line {
    fill: none;
    stroke: #b02020;
}

.stick {
    font-size: 20px;
    fill: #1b1e26;
}

.stick .csys {
    fill: #7a5662;
}

.dimension {
    font-size: 20px;
}

.dimension circle {
    fill: #ffc800;
    stroke: #8a7000;
    stroke-width: 2;
}

.dimension .halo {
    stroke: #e6bd10;
    stroke-width: 1;
}

.dimension path {
    fill: none;
    stroke: #33104f;
}

.dimension .tip {
    fill: #33104f;
}

.dimension rect {
    fill: #ecebe8;
    fill-opacity: 0.7;
}

.dimension text {
    fill: #33104f;
}

.watermark {
    font-family: "Noto Sans CJK SC", sans-serif;
    font-size: 34px;
    font-weight: 700;
    text-anchor: middle;
    fill: #f1f2f5;
}

.graphics-bar {
    position: absolute;
    top: 7px;
    left: 571px;
    display: flex;
    gap: 3px;
    width: 490px;
    height: 38px;
    padding: 4px;
    border: 1px solid #a3a5a8;
    background: #f8f9fc;
}

.graphics-bar button {
    flex: 1;
    position: relative;
    border: 1px solid transparent;
}

.graphics-bar .pressed {
    border-color: #a9abad;
}

.more::after {
    content: "";
    position: absolute;
    right: 0;
    bottom: 0;
    border-left: 4px solid transparent;
    border-bottom: 4px solid #5d6062;
}

/* 状态栏 */
.status {
    display: flex;
    height: 55px;
    border-top: 1px solid #b9bbbf;
    background: #f7f9f9;
}

.status-buttons {
    display: flex;
    gap: 4px;
    height: 26px;
    width: 104px;
    margin-top: 25px;
    padding-left: 7px;
    border-right: 1px solid #b3b5b9;
}

.status-buttons button {
    width: 26px;
}

.messages {
    padding: 8px 0 0 3px;
    font-size: 13px;
}

.messages p {
    display: flex;
    align-items: center;
    gap: 2px;
}

.find {
    display: flex;
    height: 32px;
    margin: 20px 119px 0 auto;
    padding-right: 2px;
    border: 1px solid #b9bbbd;
    border-width: 0 1px;
}

.find::before {
    content: "";
    width: 5px;
    margin-right: 2px;
    border-right: 1px solid #b9bbbd;
}

.find button {
    width: 34px;
    height: 30px;
    margin-top: 1px;
    border: 1px solid #b9bbbd;
}

.find .find-drop {
    width: 18px;
    border-left: none;
}

.selection {
    width: 218px;
    margin: 22px 20px 0 0;
}
```

FILE: qr.js
```js
// 二维码数据区，# 为深色模块
var rows = [
    "        #....##..######.###.##",
    "        .#.####..#.#.###.#.##.",
    "        #.###.##..##...###.#.#",
    "        .#..##.#.##..###.##.#.",
    "        #.#.##.##.#.##.#.##..#",
    "        ###..####.#..#.#.#.###",
    "        #.#.#.#.#.#.#.#.#.#.#.",
    "        .##...###.#.##.#..##..",
    "##..#.###.##.#.##..#.###.#.#..##.#.#.",
    "..#...#####.#..##.###.#..###.##.#..##",
    "####.#..#..##.#..##..##.#.##.#.###.#.",
    "#..###.####..###.#.##..##.#.####.##.#",
    ".#....#..##.##.#.#.#.##.##..#..###.##",
    "#.##.####..##.#.#.###...#.##.#.##.#..",
    ".#####.###.##.........#.####..###.##.",
    ".#...#...####.........#.#.##.#.##..##",
    ".######.#..#..........####.####.##.#.",
    "....#..###.##.........##.#..#..###..#",
    "###..##.#.##..........#.#####.#.#.##.",
    "#.######.##.#.........####.#.##...###",
    ".#..#..####...........#.##.#.####.#.#",
    "##.####.#.##..........##.#.#..#.###..",
    "..##..###.#.#.........#.####.##.#.##.",
    "#..##.#..#.#.##.#.#.##.#..##.#.###.##",
    ".##..#.###.##.####.#.#.##..#.##.#.##.",
    "#.#.##.#..#.#..####.#.#..##..####.#.#",
    ".#.##.#.#..##.#.##.#####.#.##.##.###.",
    "#..#.#.##.#.####.##..#.###.#..###.###",
    "##.#..##.#..##.####.###.#.#########.#",
    "        ##.###.#.##.#.##.#..#...##.#.",
    "        #.##.##.##.##..#.####.#.#.###",
    "        ##.#.####.##.#.#..#.#...#..#.",
    "        .###.#.##.#.#.####.######.##.",
    "        #.#.###..#.##.#.#.#.##.#..#.#",
    "        .##.#.####..#.#.##.#..##.##..",
    "        #.####.#.#..#.###.#..#.##.#..",
    "        .####.#.#.#...#.#...##..#.###"
];
var size = 134 / 37;
var path = "";

function square(x, y, n) {
    path += "M" + x * size + " " + y * size + "h" + n * size + "v" + n * size + "h" + -n * size + "z";
}

function ring(x, y, n) {
    square(x, y, n);
    // 内轮廓反向绘制，形成空心
    path += "M" + (x + 1) * size + " " + (y + 1) * size + "v" + (n - 2) * size + "h" + (n - 2) * size + "v" + -(n - 2) * size + "z";
}

rows.forEach(function (row, y) {
    for (var x = 0; x < row.length; x++) {
        if (row[x] === "#") square(x, y, 1);
    }
});

[[0, 0], [30, 0], [0, 30]].forEach(function (p) {
    ring(p[0], p[1], 7);
    square(p[0] + 2, p[1] + 2, 3);
});

document.getElementById("qr").setAttribute("d", path);
```
